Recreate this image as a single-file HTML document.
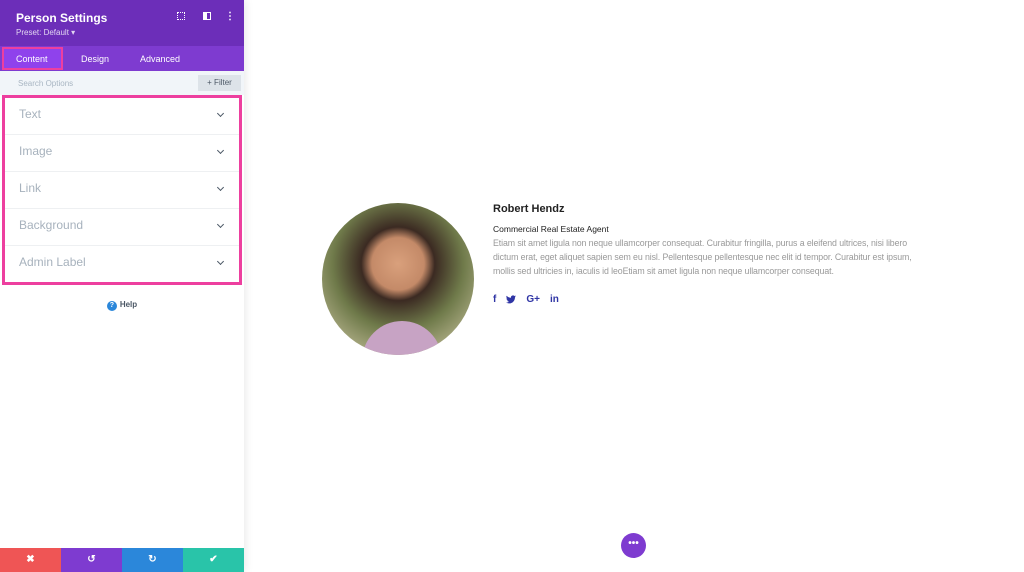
<!DOCTYPE html><html><head><style>
*{margin:0;padding:0;box-sizing:border-box}
body{width:1024px;height:572px;overflow:hidden;background:#fff;font-family:"Liberation Sans",sans-serif;position:relative}
.panel{position:absolute;left:0;top:0;width:244px;height:572px;background:#fff;box-shadow:2px 0 8px rgba(0,0,0,.08)}
.hd{height:46px;background:#6c2eb9;color:#fff;position:relative}
.hd .t{position:absolute;left:16px;top:11px;font-size:12px;font-weight:bold}
.hd .p{position:absolute;left:16px;top:28px;font-size:8px;opacity:.8}
.tabs{height:25px;background:#7e3bd0;position:relative;color:#fff;font-size:9px}
.tabs span{position:absolute;top:8px}
.ct{position:absolute;left:2px;top:1px;width:61px;height:23px;border:2px solid #ed3f9f;background:#8f42ec}
.sr{height:24px;background:#f1f5f9;position:relative;font-size:8px;color:#a9b6c3}
.fl{position:absolute;right:3px;top:4px;width:43px;height:16px;background:#dde3e9;color:#4c5866;font-size:8px;line-height:16px;text-align:center}
.box{position:absolute;left:2px;top:95px;width:240px;height:190px;border:3px solid #ed3f9f}
.row{height:37px;border-bottom:1px solid #eef0f2;position:relative;color:#a7b2bd;font-size:12px;padding:9px 0 0 14px}
.row:last-child{border:none}
.row i{position:absolute;right:16px;top:13px;width:5px;height:5px;border-right:1.5px solid #4c5866;border-bottom:1.5px solid #4c5866;transform:rotate(45deg)}
.help{position:absolute;top:300px;left:0;width:244px;text-align:center;font-size:8px;color:#4c5866;font-weight:bold}
.help b{display:inline-block;width:10px;height:10px;border-radius:50%;background:#2b87da;color:#fff;font-size:7px;line-height:10px;margin-right:3px}
.bb{position:absolute;bottom:0;left:0;width:244px;height:24px;display:flex}
.bb div{flex:1;color:#fff;text-align:center;line-height:24px;font-size:10px;font-weight:bold}
.ph{position:absolute;left:322px;top:203px;width:152px;height:152px;border-radius:50%;background:radial-gradient(circle at 50% 40%,#d9a07c 0,#c48a68 22%,#3b2a22 31%,#6f7a4a 55%,#a8a880 78%);overflow:hidden}
.ph::after{content:"";position:absolute;left:40px;top:118px;width:80px;height:50px;border-radius:40px 40px 0 0;background:#c7a3c4}
.txt{position:absolute;left:493px;top:203px;width:440px;font-family:"Liberation Sans",sans-serif}
.nm{font-size:11px;font-weight:bold;color:#222}
.jb{font-size:8.5px;color:#222;margin-top:9px}
.ds{font-size:8.8px;color:#999;line-height:14.2px;margin-top:2px;letter-spacing:-.1px}
.soc{margin-top:15px;color:#2f35a5;font-size:10px;font-weight:bold;display:flex;align-items:center;gap:10px}
.dot{position:absolute;left:621px;top:533px;width:25px;height:25px;border-radius:50%;background:#7e3bd0;color:#fff;text-align:center;font-size:10px;line-height:22px;font-weight:bold}
</style></head><body>
<div class="panel">
<div class="hd"><div class="t">Person Settings</div><div class="p">Preset: Default ▾</div>
<span style="position:absolute;left:177px;top:12px;width:8px;height:8px;border:1.5px dotted #fff"></span>
<span style="position:absolute;left:203px;top:12px;width:8px;height:8px;border:1.5px solid #fff;border-left-width:4px"></span>
<span style="position:absolute;left:225px;top:11px;color:#fff;font-size:10px;font-weight:bold">⋮</span></div>
<div class="tabs"><div class="ct"></div><span style="left:16px">Content</span><span style="left:81px">Design</span><span style="left:140px">Advanced</span></div>
<div class="sr"><span style="position:absolute;left:18px;top:8px">Search Options</span><div class="fl">+ Filter</div></div>
<div class="box">
<div class="row">Text<i></i></div><div class="row">Image<i></i></div><div class="row">Link<i></i></div><div class="row">Background<i></i></div><div class="row">Admin Label<i></i></div>
</div>
<div class="help"><b>?</b>Help</div>
<div class="bb"><div style="background:#ef5555">✖</div><div style="background:#7e3bd0">↺</div><div style="background:#2b87da">↻</div><div style="background:#29c4a9">✔</div></div>
</div>
<div class="ph"></div>
<div class="txt"><div class="nm">Robert Hendz</div><div class="jb">Commercial Real Estate Agent</div>
<div class="ds">Etiam sit amet ligula non neque ullamcorper consequat. Curabitur fringilla, purus a eleifend ultrices, nisi libero dictum erat, eget aliquet sapien sem eu nisl. Pellentesque pellentesque nec elit id tempor. Curabitur est ipsum, mollis sed ultricies in, iaculis id leoEtiam sit amet ligula non neque ullamcorper consequat.</div>
<div class="soc"><span>f</span><svg width="10" height="9" viewBox="0 0 24 20"><path fill="#2f35a5" d="M24 2.4a10 10 0 0 1-2.8.8A5 5 0 0 0 23.3.5a10 10 0 0 1-3.1 1.2A4.9 4.9 0 0 0 11.8 6 14 14 0 0 1 1.7.9a4.9 4.9 0 0 0 1.5 6.6A4.900 4.900 0 0 1 1 6.9a4.9 4.9 0 0 0 3.9 4.8 5 5 0 0 1-2.2.1 4.9 4.9 0 0 0 4.6 3.4A9.900 9.900 0 0 1 0 17.2 14 14 0 0 0 7.5 19.400c9.100 0 14-7.500 14-14v-.6A10 10 0 0 0 24 2.4z"/></svg><span>G+</span><span>in</span></div></div>
<div class="dot">•••</div>
</body></html>
